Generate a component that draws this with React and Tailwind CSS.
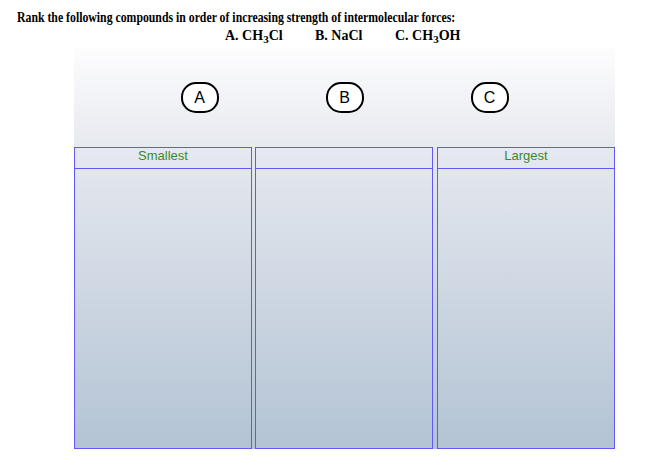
const serif = { fontFamily: '"Liberation Serif", "Times New Roman", serif' };
const sans = { fontFamily: '"Liberation Sans", Arial, sans-serif' };

function Sub({ children }) {
  return <span className="relative top-[3px] text-[11px]">{children}</span>;
}

export default function App() {
  const columns = [{ label: "Smallest" }, { label: "" }, { label: "Largest" }];
  return (
    <div className="w-[646px] h-[466px] bg-white relative overflow-hidden">
      <div className="pt-[9px] leading-[17px] font-bold text-black" style={serif}>
        <div className="pl-[17px] whitespace-nowrap text-[15px]">
          <span className="inline-block origin-left scale-x-[0.785]">
            Rank the following compounds in order of increasing strength of intermolecular forces:
          </span>
        </div>
        <div className="flex whitespace-nowrap pl-[225px] text-[14px] mt-[1px]">
          <div className="w-[90px]">
            A. CH<Sub>3</Sub>Cl
          </div>
          <div className="w-[80px]">B. NaCl</div>
          <div>
            C. CH<Sub>3</Sub>OH
          </div>
        </div>
      </div>

      <div className="absolute left-[74px] top-[48px] w-[541px] h-[401px] bg-gradient-to-b from-[#fdfdfe] via-[#e6e9ef] via-25% to-[#b3c3d4]">
        <div className="h-[99px] flex justify-center items-start gap-[107px] pt-[34px]">
          {["A", "B", "C"].map((l) => (
            <div
              key={l}
              className="w-[38px] h-[31px] rounded-[15px] border-2 border-black bg-white flex items-center justify-center text-[16px] text-black"
              style={sans}
            >
              {l}
            </div>
          ))}
        </div>
        <div className="flex gap-[3px] h-[302px]">
          {columns.map((c, i) => (
            <div
              key={i}
              className={`flex flex-col w-[178px] border border-[#6257f7] ${i === 2 ? "ml-[1px]" : ""}`}
            >
              <div
                className="h-[21px] pb-[4px] border-b border-[#6257f7] flex items-center justify-center text-[13px] text-[#3a8a2a]"
                style={sans}
              >
                {c.label}
              </div>
              <div className="flex-1" />
            </div>
          ))}
        </div>
      </div>
    </div>
  );
}
